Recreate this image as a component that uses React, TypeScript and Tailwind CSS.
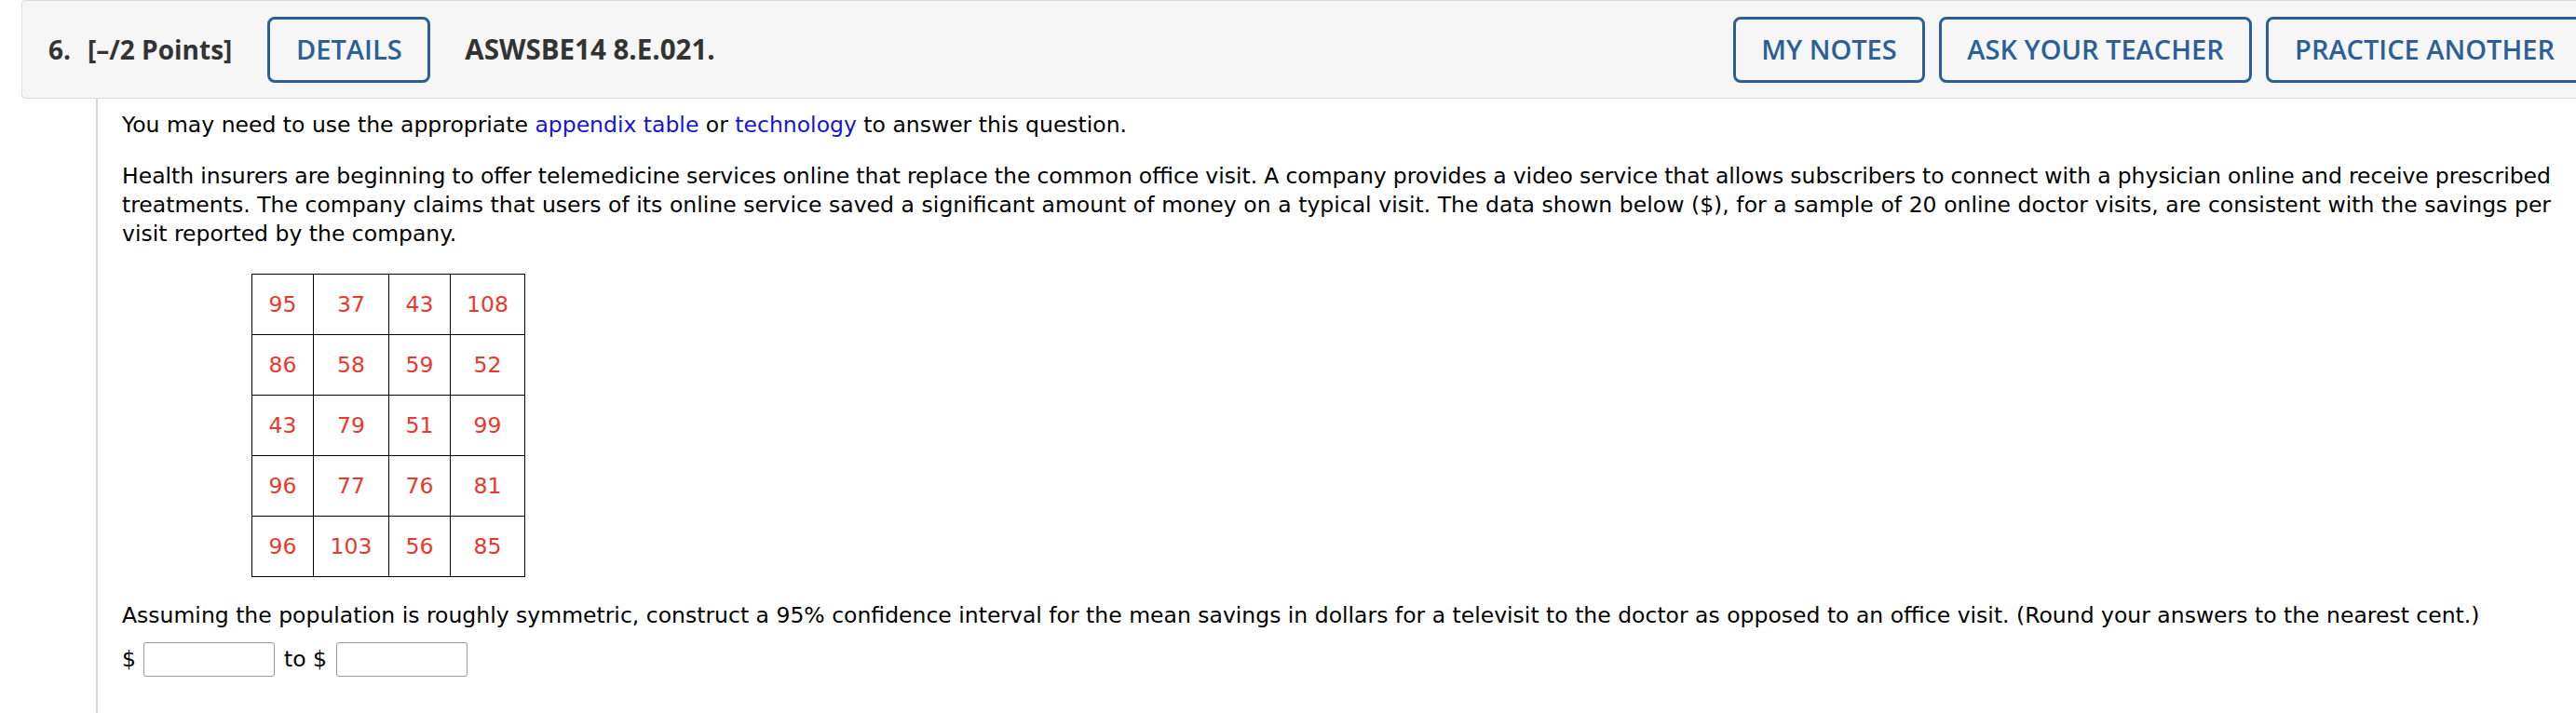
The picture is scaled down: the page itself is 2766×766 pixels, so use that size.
import React from 'react'

const rows = [
  [95, 37, 43, 108],
  [86, 58, 59, 52],
  [43, 79, 51, 99],
  [96, 77, 76, 81],
  [96, 103, 56, 85],
]

const colWidths = ['w-[66px]', 'w-[81px]', 'w-[66px]', 'w-[80px]']

function OutlineButton({ label, width }: { label: string; width: string }) {
  return (
    <button
      className={`flex h-[71px] ${width} items-center justify-center rounded-[8px] border-[3px] border-[#2b6096] text-[29px] font-semibold text-[#2b6096]`}
    >
      {label}
    </button>
  )
}

export default function App() {
  return (
    <div className="h-[766px] w-[2766px] overflow-hidden bg-white">
      <div className="w-[2800px] pl-[23px]">
        {/* question header bar */}
        <div className="flex h-[106px] w-[2768px] items-center rounded-[4px] border border-[#dcdcdc] bg-[#f6f6f6] pl-[28px] pr-[16px] font-['Open_Sans',sans-serif] text-[#333]">
          <span className="text-[28px] font-bold">6.</span>
          <span className="ml-[18px] text-[28px] font-bold">[–/2 Points]</span>
          <div className="ml-[38px]">
            <OutlineButton label="DETAILS" width="w-[175px]" />
          </div>
          <span className="ml-[37px] text-[29.5px] font-bold">ASWSBE14 8.E.021.</span>
          <div className="ml-auto flex gap-[15px]">
            <OutlineButton label="MY NOTES" width="w-[206px]" />
            <OutlineButton label="ASK YOUR TEACHER" width="w-[336px]" />
            <OutlineButton label="PRACTICE ANOTHER" width="w-[341px]" />
          </div>
        </div>

        {/* question body */}
        <div className="ml-[80px] h-[700px] border-l-2 border-[#d6d6d6] pl-[26px] pt-[13px] font-['DejaVu_Sans',Verdana,sans-serif] text-[23.5px] leading-[31px] text-black">
          <p>
            You may need to use the appropriate <a className="text-[#1414d2]">appendix table</a> or{' '}
            <a className="text-[#1414d2]">technology</a> to answer this question.
          </p>
          {/* lines kept as in the source, each justified to the full width */}
          <p className="mt-[24px] w-[2608px] whitespace-nowrap">
            <span className="block text-justify [text-align-last:justify] [word-spacing:-1px]">
              Health insurers are beginning to offer telemedicine services online that replace the common office
              visit. A company provides a video service that allows subscribers to connect with a physician online
              and receive prescribed
            </span>
            <span className="block text-justify [text-align-last:justify]">
              treatments. The company claims that users of its online service saved a significant amount of money
              on a typical visit. The data shown below ($), for a sample of 20 online doctor visits, are consistent
              with the savings per
            </span>
            <span className="block">visit reported by the company.</span>
          </p>

          <table className="ml-[139px] mt-[27px] border-collapse text-[#e8392c]">
            <tbody>
              {rows.map((row, i) => (
                <tr key={i}>
                  {row.map((v, j) => (
                    <td key={j} className={`${colWidths[j]} h-[65px] border border-black p-0 text-center`}>
                      {v}
                    </td>
                  ))}
                </tr>
              ))}
            </tbody>
          </table>

          <p className="mt-[26px] whitespace-nowrap">
            Assuming the population is roughly symmetric, construct a 95% confidence interval for the mean savings
            in dollars for a televisit to the doctor as opposed to an office visit. (Round your answers to the
            nearest cent.)
          </p>
          <div className="mt-[13px] flex items-center">
            <span>$</span>
            <input className="ml-[8px] h-[37px] w-[141px] rounded-[3px] border border-[#9a9a9a] bg-white" />
            <span className="ml-[10px]">to $</span>
            <input className="ml-[10px] h-[37px] w-[141px] rounded-[3px] border border-[#9a9a9a] bg-white" />
          </div>
        </div>
      </div>
    </div>
  )
}
